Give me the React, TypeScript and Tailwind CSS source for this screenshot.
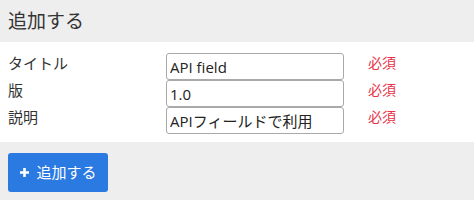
import React from "react";

const font = { fontFamily: '"Open Sans", "Noto Sans CJK JP", sans-serif' };

function Row({ label, value }: { label: string; value: string }) {
  return (
    <div className="flex items-start h-[27px]">
      <div className="w-[166px] pl-2 text-[15px] leading-[20px] text-[#333]">{label}</div>
      <input
        readOnly
        value={value}
        className="w-[178px] h-[27px] border border-[#a9a9a9] rounded-[3px] px-[3px] text-[15px] text-[#222] bg-white outline-none"
        style={font}
      />
      <div className="ml-[24px] text-[14px] leading-[20px] text-[#e8334a]">必須</div>
    </div>
  );
}

export default function App() {
  return (
    <div className="w-[474px] h-[200px] bg-white flex flex-col" style={font}>
      <div className="h-[42px] bg-[#eeeeee] flex items-center px-2 text-[19px] text-[#333]">追加する</div>
      <div className="pt-[11px] pb-[8px] flex flex-col">
        <Row label="タイトル" value="API field" />
        <Row label="版" value="1.0" />
        <Row label="説明" value="APIフィールドで利用" />
      </div>
      <div className="flex-1 bg-[#eeeeee] pt-[11px] pl-2">
        <button className="w-[100px] h-[39px] bg-[#2a7ae2] rounded-[3px] text-white text-[15px] flex items-center justify-center gap-[6px]">
          <svg width="11" height="11" viewBox="0 0 11 11">
            <path d="M5.5 1v9M1 5.5h9" stroke="white" strokeWidth="2.6" />
          </svg>
          <span>追加する</span>
        </button>
      </div>
    </div>
  );
}
